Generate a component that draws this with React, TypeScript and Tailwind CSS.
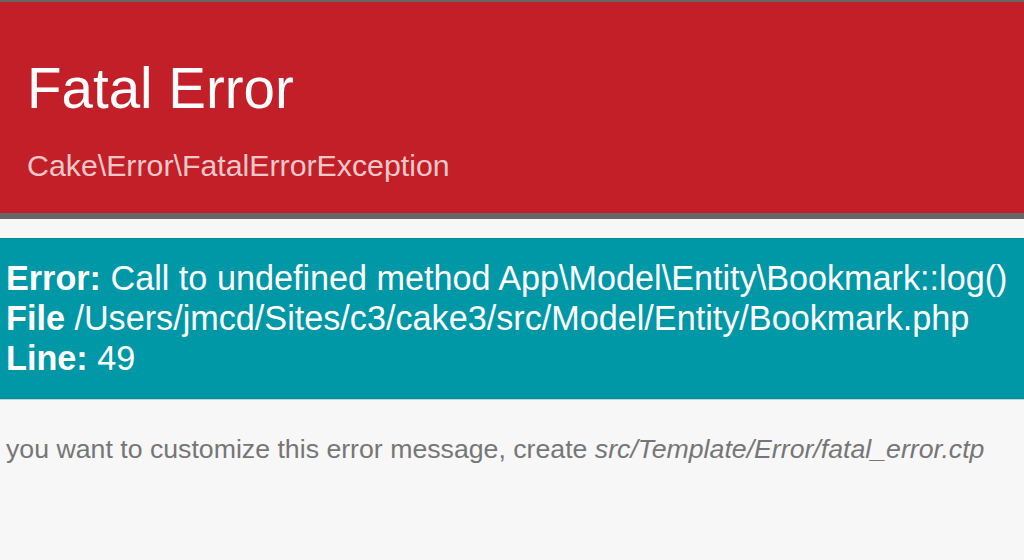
import React from 'react';

const App: React.FC = () => {
  return (
    <div className="min-h-[560px] w-full bg-[#f7f7f7] font-['Liberation_Sans',Arial,sans-serif] overflow-hidden">
      <header className="bg-[#c31f28] border-t-2 border-b-[6px] border-[#666666] pl-[27px] pt-[55px] pb-[29px]">
        <h1 className="text-[56.5px] leading-[64px] text-white whitespace-nowrap">Fatal Error</h1>
        <p className="mt-[27px] text-[30.3px] leading-[36px] text-[#f0c7c9] whitespace-nowrap">
          Cake\Error\FatalErrorException
        </p>
      </header>

      <div className="mt-[19px] bg-[#0097a7] border-t border-b border-[#0a8691] shadow-[0_1px_0_#b2dde2] pl-[6px] pt-[19px] pb-[20px] text-white text-[34.2px] leading-[40px] whitespace-nowrap">
        <div>
          <strong>Error:</strong> Call to undefined method App\Model\Entity\Bookmark::log()
        </div>
        <div>
          <strong>File</strong> /Users/jmcd/Sites/c3/cake3/src/Model/Entity/Bookmark.php
        </div>
        <div>
          <strong>Line:</strong> 49
        </div>
      </div>

      <p className="mt-[34px] pl-[6px] text-[26.7px] leading-[32px] text-[#767676] whitespace-nowrap">
        you want to customize this error message, create <em>src/Template/Error/fatal_error.ctp</em>
      </p>
    </div>
  );
};

export default App;
